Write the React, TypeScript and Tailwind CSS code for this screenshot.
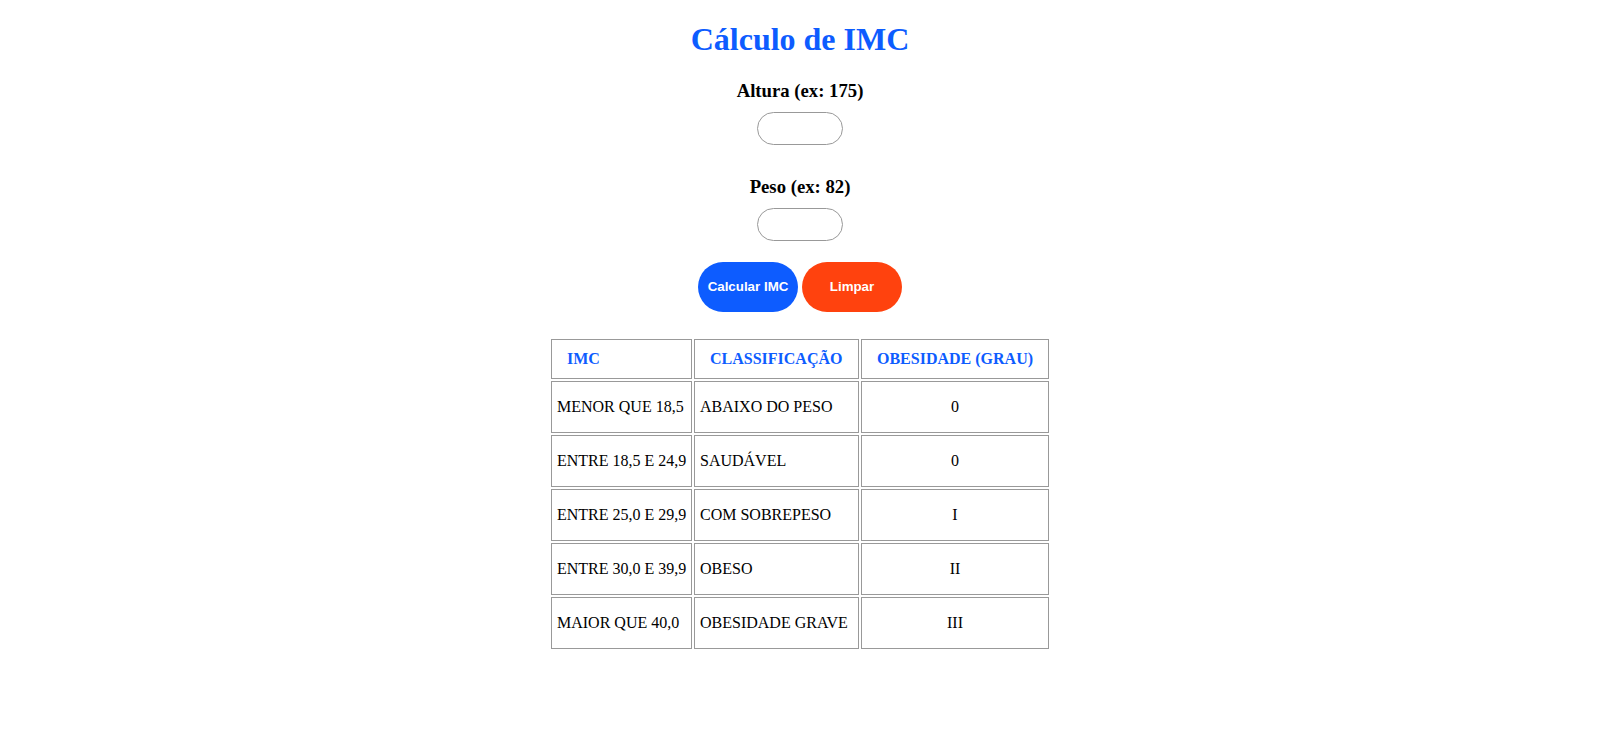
import { useState } from "react";

const FAIXAS = [
  { imc: "MENOR QUE 18,5", classe: "ABAIXO DO PESO", grau: "0" },
  { imc: "ENTRE 18,5 E 24,9", classe: "SAUDÁVEL", grau: "0" },
  { imc: "ENTRE 25,0 E 29,9", classe: "COM SOBREPESO", grau: "I" },
  { imc: "ENTRE 30,0 E 39,9", classe: "OBESO", grau: "II" },
  { imc: "MAIOR QUE 40,0", classe: "OBESIDADE GRAVE", grau: "III" },
];

export default function App() {
  const [altura, setAltura] = useState("");
  const [peso, setPeso] = useState("");

  function limpar() {
    setAltura("");
    setPeso("");
  }

  return (
    <div className="min-h-[749px] w-full bg-white text-center font-['Liberation_Serif','Times_New_Roman',serif] text-black">
      <h1 className="pt-[21px] text-[32px] font-bold leading-[37px] text-[#0d5cff]">Cálculo de IMC</h1>

      <div className="mt-[22px] text-[18.72px] font-bold leading-[22px]">Altura (ex: 175)</div>
      <input
        value={altura}
        onChange={(e) => setAltura(e.target.value)}
        className="mt-[10px] h-[33px] w-[86px] rounded-full border border-[#999] px-3 text-center outline-none"
      />

      <div className="mt-[31px] text-[18.72px] font-bold leading-[22px]">Peso (ex: 82)</div>
      <input
        value={peso}
        onChange={(e) => setPeso(e.target.value)}
        className="mt-[10px] h-[33px] w-[86px] rounded-full border border-[#999] px-3 text-center outline-none"
      />

      <div className="mt-[21px] flex justify-center gap-[4px] font-['Liberation_Sans',Arial,sans-serif] text-[13.33px] font-bold text-white">
        <button className="h-[50px] w-[100px] rounded-full bg-[#0d5cff]">Calcular IMC</button>
        <button onClick={limpar} className="h-[50px] w-[100px] rounded-full bg-[#ff420e]">
          Limpar
        </button>
      </div>

      <table className="mx-auto mt-[25px] w-[502px] table-fixed border-separate border-spacing-[2px] text-[16px] leading-[18px]">
        <thead>
          <tr>
            <th className="h-[40px] w-[141px] border border-[#999] px-[15px] text-left font-bold text-[#0d5cff]">IMC</th>
            <th className="h-[40px] w-[165px] border border-[#999] px-[15px] text-left font-bold text-[#0d5cff]">CLASSIFICAÇÃO</th>
            <th className="h-[40px] w-[188px] border border-[#999] px-[15px] text-left font-bold text-[#0d5cff]">OBESIDADE (GRAU)</th>
          </tr>
        </thead>
        <tbody>
          {FAIXAS.map((f) => (
            <tr key={f.imc}>
              <td className="h-[52px] whitespace-nowrap border border-[#999] px-[5px] text-left">{f.imc}</td>
              <td className="h-[52px] whitespace-nowrap border border-[#999] px-[5px] text-left">{f.classe}</td>
              <td className="h-[52px] border border-[#999] px-[5px] text-center">{f.grau}</td>
            </tr>
          ))}
        </tbody>
      </table>
    </div>
  );
}
